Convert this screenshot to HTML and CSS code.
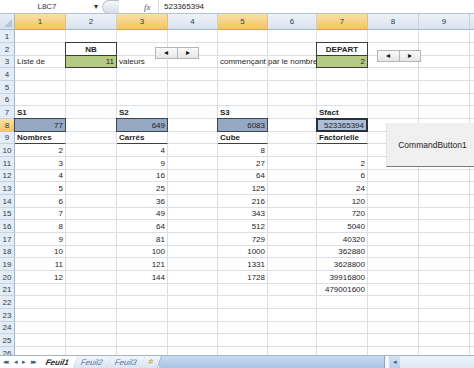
FILE: index.html
```
<!DOCTYPE html>
<html>

<head>
	<meta charset="utf-8">
	<link rel="stylesheet" href="styles.css">
</head>

<body>
	<div class="window">
		<div class="formulaBar">
			<div class="nameBox">L8C7</div>
			<div class="nameArrow">▾</div>
			<div class="knob"></div>
			<div class="fx">fx</div>
			<div class="formula">523365394</div>
		</div>

		<div class="sheetArea">
			<div class="sheet" id="sheet"></div>

			<div class="spin spin1"><span>◂</span><span>▸</span></div>
			<div class="spin spin2"><span>◂</span><span>▸</span></div>
			<div class="cmdButton">CommandButton1</div>
		</div>

		<div class="tabBar">
			<div class="tabNav"><span>◂◂</span><span>◂</span><span>▸</span><span>▸▸</span></div>
			<div class="tab active">Feuil1</div>
			<div class="tab">Feuil2</div>
			<div class="tab">Feuil3</div>
			<div class="tab newTab">✲</div>
			<div class="tabFill"></div>
			<div class="splitter"></div>
			<div class="hScroll"><span class="scrollArrow">◂</span></div>
		</div>
	</div>

	<script>
		const cells = {
			"2,2": { t: "NB", c: "bold center boxTop" },
			"2,7": { t: "DEPART", c: "bold center boxTop" },
			"3,1": { t: "Liste de", c: "over" },
			"3,2": { t: "11", c: "num green boxBottom" },
			"3,3": { t: "valeurs", c: "over" },
			"3,5": { t: "commençant par le nombre", c: "over" },
			"3,7": { t: "2", c: "num green boxBottom" },
			"7,1": { t: "S1", c: "bold" },
			"7,3": { t: "S2", c: "bold" },
			"7,5": { t: "S3", c: "bold" },
			"7,7": { t: "Sfact", c: "bold" },
			"8,1": { t: "77", c: "num sum" },
			"8,3": { t: "649", c: "num sum" },
			"8,5": { t: "6083", c: "num sum" },
			"8,7": { t: "523365394", c: "num sum sel" },
			"9,1": { t: "Nombres", c: "bold under" },
			"9,3": { t: "Carrés", c: "bold under" },
			"9,5": { t: "Cube", c: "bold under" },
			"9,7": { t: "Factorielle", c: "bold under" }
		};

		// Tableau des valeurs
		let fact = 1;
		for (let n = 2; n <= 12; n++) {
			const row = n + 8;
			cells[row + ",1"] = { t: String(n), c: "num" };
			cells[row + ",3"] = { t: String(n * n), c: "num" };
			cells[row + ",5"] = { t: String(n * n * n), c: "num" };
		}
		for (let n = 2; n <= 12; n++) {
			fact = fact * n;
			cells[(n + 9) + ",7"] = { t: String(fact), c: "num" };
		}

		const sheet = document.getElementById("sheet");
		const selCols = [1, 3, 5, 7];

		// Entête des colonnes
		const corner = document.createElement("div");
		corner.className = "corner";
		sheet.appendChild(corner);
		for (let c = 1; c <= 10; c++) {
			const h = document.createElement("div");
			h.className = "colHead" + (selCols.includes(c) ? " hot" : "");
			if (c < 10) h.textContent = c;
			sheet.appendChild(h);
		}

		for (let r = 1; r <= 26; r++) {
			const h = document.createElement("div");
			h.className = "rowHead" + (r === 8 ? " hot" : "");
			h.textContent = r;
			sheet.appendChild(h);
			for (let c = 1; c <= 10; c++) {
				const cell = document.createElement("div");
				const data = cells[r + "," + c];
				cell.className = "cell";
				if (data) {
					cell.className += " " + data.c;
					cell.textContent = data.t;
				}
				sheet.appendChild(cell);
			}
		}
	</script>
</body>

</html>
```

FILE: styles.css
```
body {
	margin: 0;
	font-family: "Liberation Sans", Arial, sans-serif;
	font-size: 8px;
	color: #1e1e1e;
	background-color: #fff;
}

.window {
	width: 474px;
	height: 368px;
	overflow: hidden;
	display: flex;
	flex-direction: column;
}

/* Barre de formule */
.formulaBar {
	height: 13px;
	flex: none;
	display: flex;
	align-items: center;
	border-bottom: solid 1px #b1c3d9;
	background-color: #fff;
}

.nameBox {
	width: 94px;
	text-align: center;
	color: #333;
}

.nameArrow {
	width: 8px;
	font-size: 8px;
	color: #333;
}

.knob {
	width: 16px;
	height: 12px;
	border-radius: 8px 0 0 8px;
	border: solid 1px #b9c3cf;
	border-right: none;
	background: linear-gradient(#f4f6f9, #d9dee6);
}

.fx {
	margin-left: 25px;
	width: 14px;
	font-family: "Liberation Serif", serif;
	font-style: italic;
	font-size: 9px;
	color: #555;
}

.formula {
	padding-left: 5px;
	border-left: solid 1px #d3dbe6;
	height: 13px;
	line-height: 13px;
	color: #222;
}

/* Feuille */
.sheetArea {
	position: relative;
	flex: 1;
	overflow: hidden;
}

.sheet {
	display: grid;
	grid-template-columns: 15px 51px 51px 51px 50px 50px 49px 51px 51px 51px 10px;
	grid-template-rows: 16px repeat(9, 13px 13px 12px);
}

.corner {
	background: linear-gradient(#e8eef7, #d5dfec);
	border-right: solid 1px #9eb6ce;
	border-bottom: solid 1px #9eb6ce;
	position: relative;
}

.corner::after {
	content: "";
	position: absolute;
	right: 2px;
	bottom: 2px;
	border-left: solid 8px transparent;
	border-bottom: solid 8px #b3c5da;
}

.colHead {
	background: linear-gradient(#eef2f8, #dae3ee);
	border-right: solid 1px #c5d2e2;
	border-bottom: solid 1px #9eb6ce;
	color: #27413e;
	font-size: 8px;
	display: flex;
	align-items: center;
	justify-content: center;
}

.rowHead {
	background-color: #e4ecf7;
	border-right: solid 1px #9eb6ce;
	border-bottom: solid 1px #c5d2e2;
	color: #27413e;
	display: flex;
	align-items: center;
	justify-content: center;
}

.hot {
	background: linear-gradient(#fae0a6, #f2c464);
	border-bottom-color: #f2c464;
}

.colHead.hot {
	border-bottom-color: #e1a13a;
	border-right-color: #e8bd74;
}

.cell {
	border-right: solid 1px #dadfe6;
	border-bottom: solid 1px #dadfe6;
	padding: 0 2px;
	display: flex;
	align-items: center;
	white-space: nowrap;
	min-width: 0;
}

.over {
	overflow: visible;
	position: relative;
	z-index: 1;
}

.num {
	justify-content: flex-end;
}

.center {
	justify-content: center;
}

.bold {
	font-weight: bold;
}

.boxTop,
.boxBottom {
	border: solid 1px #3c3c3c;
	margin: -1px 0 0 -1px;
	z-index: 2;
}

.green {
	background-color: #b4cb86;
}

.sum {
	background-color: #95a8c4;
	border: solid 1px #3c4450;
	margin: -1px 0 0 -1px;
}

.sel {
	background-color: #aebfd9;
	border: solid 2px #2b2f36;
}

.under {
	border-bottom: solid 1px #404040;
}

/* Contrôles */
.spin {
	position: absolute;
	display: flex;
	width: 42px;
	height: 10px;
	border: solid 1px #b5b5b5;
	background: linear-gradient(#fafafa, #e6e6e6);
}

.spin span {
	flex: 1;
	display: flex;
	align-items: center;
	justify-content: center;
	font-size: 8px;
	line-height: 8px;
	color: #111;
}

.spin span:first-child {
	border-right: solid 1px #b5b5b5;
}

.spin1 {
	left: 155px;
	top: 33px;
}

.spin2 {
	left: 377px;
	top: 36px;
}

.cmdButton {
	position: absolute;
	left: 386px;
	top: 109px;
	width: 92px;
	height: 44px;
	background-color: #f0f0f0;
	border-bottom: solid 1px #7a7a7a;
	border-left: solid 1px #e3e3e3;
	display: flex;
	align-items: center;
	justify-content: center;
	font-size: 8.5px;
	color: #222;
	box-sizing: border-box;
}

/* Onglets */
.tabBar {
	height: 13px;
	flex: none;
	display: flex;
	align-items: stretch;
	background-color: #fff;
	border-top: solid 1px #9eb6ce;
	box-sizing: border-box;
}

.tabNav {
	width: 38px;
	display: flex;
	align-items: center;
	justify-content: space-around;
	font-size: 7px;
	color: #3b5a82;
	letter-spacing: -2px;
}

.tab {
	padding: 0 6px;
	display: flex;
	align-items: center;
	color: #54739a;
	background: linear-gradient(#f2f6fb, #d9e4f2);
	border-right: solid 1px #9eb6ce;
	transform: skewX(-20deg);
	margin-right: -1px;
}

.tab.active {
	background: #fff;
	color: #222;
	font-weight: bold;
	margin-left: 2px;
}

.newTab {
	color: #d09a2e;
	font-size: 7px;
	padding: 0 5px;
}

.tabFill {
	flex: 1;
	background: linear-gradient(#c9daf0, #a9c3e6);
}

.splitter {
	width: 5px;
	background: linear-gradient(90deg, #e6edf7, #fff, #c9d7ea);
	border-left: solid 1px #8ea7c7;
}

.hScroll {
	width: 84px;
	background: linear-gradient(#eef3fa, #dde7f4);
	display: flex;
	align-items: center;
}

.scrollArrow {
	width: 10px;
	font-size: 7px;
	color: #3b5a82;
	text-align: center;
	background: linear-gradient(#d6e2f2, #b9cde8);
	height: 100%;
	display: flex;
	align-items: center;
	justify-content: center;
}
```
